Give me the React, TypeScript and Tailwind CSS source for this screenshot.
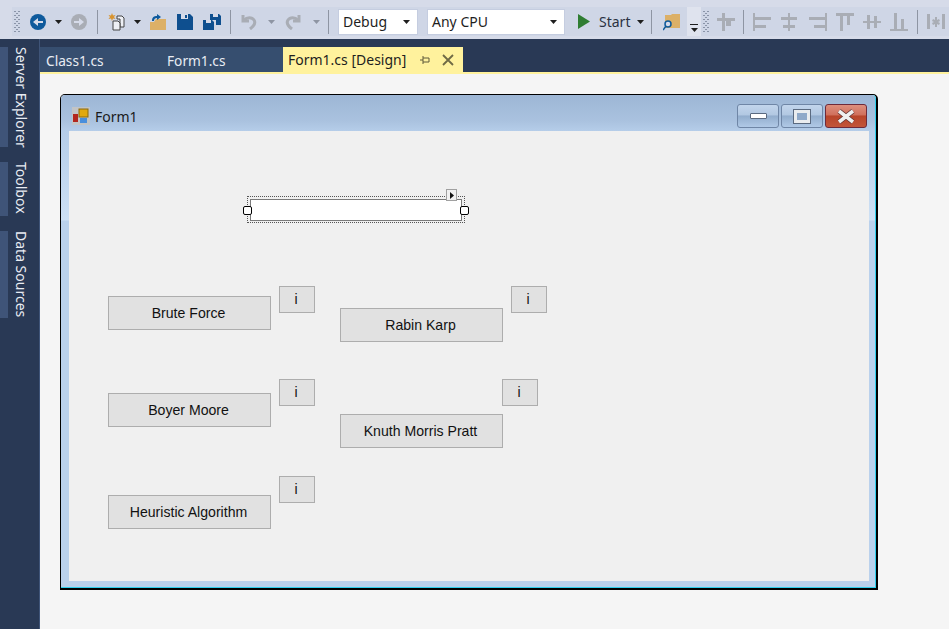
import React from 'react';

const Arrow = ({ color = '#1e1e1e' }: { color?: string }) => (
  <svg width="7" height="4" viewBox="0 0 7 4" className="shrink-0">
    <path d="M0 0h7L3.5 4z" fill={color} />
  </svg>
);

const Sep = ({ className }: { className: string }) => <div className={`w-px h-[24px] bg-[#8e95a3] shrink-0 ${className}`} />;

const Gripper = ({ className }: { className: string }) => (
  <svg width="6" height="22" viewBox="0 0 6 22" className={`shrink-0 ${className}`}>
    {[0, 4, 8, 12, 16, 20].map(y => (
      <g key={y} fill="#8a94a8">
        <rect x="0" y={y} width="2" height="1" />
        <rect x="4" y={y} width="2" height="1" />
        <rect x="2" y={y + 2} width="2" height="1" />
      </g>
    ))}
  </svg>
);

const NavIcon = ({ color, flip, className }: { color: string; flip?: boolean; className: string }) => (
  <svg width="16" height="16" viewBox="0 0 16 16" className={`shrink-0 ${className}`}>
    <circle cx="8" cy="8" r="8" fill={color} />
    <path d={flip ? 'M3 7h5V4l5 4-5 4V9H3z' : 'M13 7H8V4L3 8l5 4V9h5z'} fill="#d6dbe9" />
  </svg>
);

const AlignIcon = ({ d, className }: { d: string; className: string }) => (
  <svg width="18" height="18" viewBox="0 0 18 18" className={`shrink-0 ${className}`}>
    <path d={d} fill="#a9adb5" />
  </svg>
);

const Combo = ({ label, className }: { label: string; className: string }) => (
  <div className={`h-[26px] bg-white border border-[#c5cde0] flex items-center justify-between pl-[4px] pr-[7px] text-[14px] text-[#1e1e1e] shrink-0 ${className}`}>
    <span>{label}</span>
    <Arrow />
  </div>
);

const Toolbar = () => (
  <div className="h-[39px] bg-[#d6dbe9] pt-[7px] shrink-0">
    <div className="h-[29px] ml-[12px] bg-[#cfd6e6] flex items-center text-[#1e1e1e]">
      <Gripper className="ml-[2px]" />
      <NavIcon color="#0e5a9c" className="ml-[10px]" />
      <div className="ml-[9px]"><Arrow /></div>
      <NavIcon color="#a9adb5" flip className="ml-[9px]" />
      <Sep className="ml-[10px]" />
      {/* new project */}
      <svg width="18" height="18" viewBox="0 0 18 18" className="ml-[10px] shrink-0">
        <path d="M9 3h5l2 2v9h-4V6H9z" fill="#eef0f5" stroke="#444" />
        <path d="M5 8h5l2 2v7H5z" fill="#eef0f5" stroke="#444" />
        <path d="M4 0l1 2.5L7.5 2 6 4l1.5 2L5 5.500 4 8 3 5.500.5 6 2 4 .5 2 3 2.500z" fill="#d9942e" />
      </svg>
      <div className="ml-[8px]"><Arrow /></div>
      {/* open */}
      <svg width="18" height="18" viewBox="0 0 18 18" className="ml-[8px] shrink-0">
        <path d="M1 9h4l2-3h10v11H1z" fill="#dcb067" />
        <path d="M3 8c0-4 2-5 5-5V1l4 3-4 3V5C6 5 5 6 5 8z" fill="#0e5a9c" />
      </svg>
      {/* save */}
      <svg width="16" height="16" viewBox="0 0 16 16" className="ml-[10px] shrink-0">
        <path d="M0 0h13l3 3v13H0z" fill="#0e4f8f" />
        <path d="M4 0h7v5H4z" fill="#d6dbe9" />
        <path d="M3 9h10v7H3z" fill="#0e4f8f" />
        <path d="M8 1h2v3H8z" fill="#0e4f8f" />
      </svg>
      {/* save all */}
      <svg width="18" height="16" viewBox="0 0 18 16" className="ml-[10px] shrink-0">
        <path d="M7 0h9l2 2v9h-5V6H7z" fill="#0e4f8f" />
        <path d="M10 0h5v3h-5z" fill="#d6dbe9" />
        <path d="M0 6h9l2 2v8H0z" fill="#0e4f8f" />
        <path d="M3 6h5v3H3z" fill="#d6dbe9" />
      </svg>
      <Sep className="ml-[9px]" />
      {/* undo */}
      <svg width="16" height="16" viewBox="0 0 16 16" className="ml-[10px] shrink-0" fill="none">
        <path d="M2 1v6h6" stroke="#a9adb5" strokeWidth="3" />
        <path d="M3 6c3-3 8-3 10 0s0 6-4 9" stroke="#a9adb5" strokeWidth="3" />
      </svg>
      <div className="ml-[11px]"><Arrow color="#8e95a3" /></div>
      {/* redo */}
      <svg width="16" height="16" viewBox="0 0 16 16" className="ml-[10px] shrink-0" fill="none">
        <path d="M14 1v6H8" stroke="#a9adb5" strokeWidth="3" />
        <path d="M13 6c-3-3-8-3-10 0s0 6 4 9" stroke="#a9adb5" strokeWidth="3" />
      </svg>
      <div className="ml-[12px]"><Arrow color="#8e95a3" /></div>
      <Sep className="ml-[8px]" />
      <Combo label="Debug" className="ml-[9px] w-[80px]" />
      <Combo label="Any CPU" className="ml-[9px] w-[138px]" />
      <svg width="12" height="15" viewBox="0 0 12 15" className="ml-[13px] shrink-0">
        <path d="M0 0l12 7.500L0 15z" fill="#2f7d32" />
      </svg>
      <span className="ml-[9px] text-[14px] w-[33px] shrink-0 text-[#2a3242]">Start</span>
      <div className="ml-[5px]"><Arrow /></div>
      <Sep className="ml-[7px]" />
      {/* find in files */}
      <svg width="18" height="18" viewBox="0 0 18 18" className="ml-[11px] shrink-0">
        <path d="M2 2h6l1-1h8v14H2z" fill="#dcb067" />
        <circle cx="5" cy="11" r="3" fill="#d6dbe9" stroke="#0e5a9c" strokeWidth="1.500" />
        <path d="M3 13l-3 4" stroke="#0e5a9c" strokeWidth="1.500" />
      </svg>
      <div className="ml-[6px] w-[14px] h-[29px] bg-[#dfe3ee] flex flex-col items-center justify-end pb-[4px] shrink-0">
        <div className="w-[8px] h-px bg-[#1e1e1e] mb-[3px]" />
        <Arrow />
      </div>
      <Gripper className="ml-[2px]" />
      <AlignIcon className="ml-[8px]" d="M5 0h3v18H5zM0 5h18v3H0zM9 8h5v5H9z" />
      <Sep className="ml-[8px]" />
      <AlignIcon className="ml-[9px]" d="M0 0h2v18H0zM2 4h16v3H2zM2 12h11v3H2z" />
      <AlignIcon className="ml-[10px]" d="M7 0h2v18H7zM0 4h16v3H0zM2 12h12v3H2z" />
      <AlignIcon className="ml-[10px]" d="M16 0h2v18h-2zM0 4h16v3H0zM5 12h11v3H5z" />
      <AlignIcon className="ml-[9px]" d="M0 0h18v3H0zM4 3h3v15H4zM11 3h3v9h-3z" />
      <AlignIcon className="ml-[9px]" d="M0 8h18v2H0zM4 2h3v14H4zM11 3h3v12h-3z" />
      <AlignIcon className="ml-[9px]" d="M0 16h18v2H0zM4 0h3v16H4zM11 6h3v10h-3z" />
      <Sep className="ml-[9px]" />
      <AlignIcon className="ml-[9px]" d="M0 1h3v15H0zM15 1h3v15h-3zM8 4h2v3l2-1 1 2-2 1 2 1-1 2-2-1v3H8v-3l-2 1-1-2 2-1-2-1 1-2 2 1z" />
    </div>
  </div>
);

const SideTab = ({ label, className }: { label: string; className: string }) => (
  <div className={`flex ${className}`}>
    <div className="w-[8px] bg-[#3f5478] shrink-0" />
    <div className="pl-[5px] [writing-mode:vertical-rl] whitespace-nowrap text-[14px] leading-[17px] text-[#e8ecf3]">{label}</div>
  </div>
);

const Sidebar = () => (
  <div className="w-[40px] shrink-0 bg-[#293955] pt-[8px] flex flex-col gap-[15px] border-r border-[#3f5478]">
    <SideTab label="Server Explorer" className="h-[100px]" />
    <SideTab label="Toolbox" className="h-[54px]" />
    <SideTab label="Data Sources" className="h-[87px]" />
  </div>
);

const TabStrip = () => (
  <div className="h-[25px] flex text-[14px] shrink-0">
    <div className="w-[121px] bg-[#364e6f] text-[#e8ecf3] pl-[6px] text-[13.7px] leading-[27px]">Class1.cs</div>
    <div className="w-[122px] bg-[#364e6f] text-[#e8ecf3] pl-[6px] text-[13.7px] leading-[27px]">Form1.cs</div>
    <div className="w-[180px] bg-[#fff29d] text-[#1e1e1e] pl-[5px] leading-[27px] flex items-center">
      <span>Form1.cs [Design]</span>
      <svg width="10" height="10" viewBox="0 0 10 10" className="ml-[14px]">
        <path d="M0 5h3M3 1v8M3 3h6M3 7h6M9 3v4" stroke="#5f5a3a" fill="none" />
      </svg>
      <svg width="12" height="12" viewBox="0 0 12 12" className="ml-[12px]">
        <path d="M1 1l10 10M11 1L1 11" stroke="#6f6a45" strokeWidth="1.800" />
      </svg>
    </div>
  </div>
);

const CaptionButton = ({ children, close }: { children: React.ReactNode; close?: boolean }) => (
  <div
    className={`w-[42px] h-[24px] rounded-[3px] border flex items-center justify-center ${
      close
        ? 'border-[#6e2a3a] bg-[linear-gradient(#dd8f7e_0%,#d0705c_45%,#b8452a_50%,#c2553a_100%)]'
        : 'border-[#6f86a6] bg-[linear-gradient(#c2d5ec_0%,#b2c8e2_45%,#92adcd_50%,#b0c9e6_100%)]'
    }`}
  >
    {children}
  </div>
);

const WinButton = ({ label, className }: { label: string; className: string }) => (
  <div className={`absolute flex items-center justify-center pt-px pr-[2px] bg-[#e1e1e1] border border-[#adadad] text-[14.1px] text-[#111] ${className}`}>
    {label}
  </div>
);

const FormWindow = () => (
  <div className="w-[818px] h-[496px] rounded-t-[5px] border border-black border-r-2 border-b-2 shrink-0">
    <div className="h-full flex flex-col rounded-t-[4px] border-r border-b border-[#2fd0ee] bg-[linear-gradient(#9db6d5_0px,#aac2df_26px,#b5cde9_36px,#cde0f4_125px,#bad1ec_126px,#bad1ec_100%)]">
      <div className="h-[36px] flex items-center pt-[6px] pl-[11px] pr-[8px] shrink-0">
        <svg width="18" height="18" viewBox="0 0 18 18" className="shrink-0">
          <rect width="18" height="18" fill="#c2c4c6" />
          <rect x="1" y="7" width="5" height="8" fill="#b3261e" />
          <rect x="7" y="2" width="9" height="8" fill="#e2a90f" stroke="#8a6a10" />
          <rect x="8" y="11" width="7" height="5" fill="#4a8fdc" />
        </svg>
        <span className="ml-[5px] text-[14px] text-[#1a1a1a] flex-1">Form1</span>
        <div className="flex gap-[2px]">
          <CaptionButton>
            <div className="w-[17px] h-[6px] bg-white border border-[#5a6a80] rounded-[1px]" />
          </CaptionButton>
          <CaptionButton>
            <div className="w-[16px] h-[13px] bg-[#8fa9c9] border-[3px] border-[#e9ecef] outline outline-[#5a6a80]" />
          </CaptionButton>
          <CaptionButton close>
            <svg width="18" height="15" viewBox="0 0 18 15">
              <path d="M2 2l14 11M16 2L2 13" stroke="#5e3030" strokeWidth="5" />
              <path d="M2 2l14 11M16 2L2 13" stroke="#f0f0f0" strokeWidth="3.500" />
            </svg>
          </CaptionButton>
        </div>
      </div>
      <div className="relative ml-[8px] w-[800px] h-[450px] bg-[#f0f0f0] font-['Liberation_Sans',sans-serif]">
        {/* selected text box */}
        <div className="absolute left-[178px] top-[65px] w-[218px] h-[27px] border border-dotted border-[#555]" />
        <div className="absolute left-[181px] top-[68px] w-[212px] h-[22px] bg-white border border-[#7a7a7a]" />
        <div className="absolute left-[174px] top-[75px] w-[9px] h-[9px] bg-white border border-black rounded-[2px]" />
        <div className="absolute left-[391px] top-[75px] w-[9px] h-[9px] bg-white border border-black rounded-[2px]" />
        <div className="absolute left-[377px] top-[58px] w-[11px] h-[12px] bg-[#f0f0f0] border border-[#a0a0a0] flex items-center justify-center">
          <svg width="4" height="7" viewBox="0 0 4 7"><path d="M0 0l4 3.500L0 7z" fill="#111" /></svg>
        </div>

        <WinButton label="Brute Force" className="left-[39px] top-[165px] w-[163px] h-[34px]" />
        <WinButton label="i" className="left-[210px] top-[155px] w-[36px] h-[27px]" />
        <WinButton label="Rabin Karp" className="left-[271px] top-[177px] w-[163px] h-[34px]" />
        <WinButton label="i" className="left-[442px] top-[155px] w-[36px] h-[27px]" />
        <WinButton label="Boyer Moore" className="left-[39px] top-[262px] w-[163px] h-[34px]" />
        <WinButton label="i" className="left-[210px] top-[248px] w-[36px] h-[27px]" />
        <WinButton label="Knuth Morris Pratt" className="left-[271px] top-[283px] w-[163px] h-[34px]" />
        <WinButton label="i" className="left-[433px] top-[248px] w-[36px] h-[27px]" />
        <WinButton label="Heuristic Algorithm" className="left-[39px] top-[364px] w-[163px] h-[34px]" />
        <WinButton label="i" className="left-[210px] top-[345px] w-[36px] h-[27px]" />
      </div>
    </div>
  </div>
);

const App: React.FC = () => {
  return (
    <div className="w-[949px] h-[629px] flex flex-col overflow-hidden font-['Noto_Sans',sans-serif]">
      <Toolbar />
      <div className="flex-1 flex min-h-0">
        <Sidebar />
        <div className="flex-1 flex flex-col bg-[#293955] pt-[8px] min-w-0">
          <TabStrip />
          <div className="h-[2px] bg-[#fff29d] shrink-0" />
          <div className="flex-1 bg-[#f5f5f5] pl-[20px] pt-[20px]">
            <FormWindow />
          </div>
        </div>
      </div>
    </div>
  );
};

export default App;
